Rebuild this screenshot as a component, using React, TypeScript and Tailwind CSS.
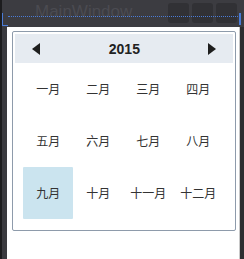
import React from "react";

const months = [
  "一月", "二月", "三月", "四月",
  "五月", "六月", "七月", "八月",
  "九月", "十月", "十一月", "十二月",
];

export default function App() {
  return (
    <div className="relative w-[244px] h-[259px] overflow-hidden bg-white flex flex-col" style={{ fontFamily: '"Noto Sans CJK SC", sans-serif' }}>
      {/* top bar */}
      <div className="h-[27px] flex shrink-0 bg-[#3c3c41]">
        <div className="w-[2px] bg-[#1c1c1e]" />
        <div className="flex-1 relative overflow-hidden">
          <div
            className="absolute left-[33px] top-[2px] text-[17px] leading-[20px] text-[#4b4b51]"
            style={{ fontFamily: '"Liberation Sans", Arial, sans-serif' }}
          >
            MainWindow
          </div>
          <div className="absolute left-[166px] top-[3px] flex gap-[3px]">
            <div className="w-[21px] h-[20px] rounded-[3px] bg-[#313135]" />
            <div className="w-[21px] h-[20px] rounded-[3px] bg-[#313135]" />
            <div className="w-[21px] h-[20px] rounded-[3px] bg-[#313135]" />
          </div>
        </div>
      </div>
      {/* body row */}
      <div className="flex-1 flex">
        <div className="w-[2px] bg-[#1c1c1e]" />
        <div className="w-[6px] bg-[#3a3a3f]" />
        <div className="flex-1 bg-white pl-[5px] pt-[4px] pr-[3px]">
          <div className="w-[224px] h-[200px] border border-[#8e9bab] rounded-[2px] bg-white p-[2px] flex flex-col">
            <div className="h-[29px] bg-[#e6ebf1] flex items-center justify-between px-[17px]">
              <svg width="8" height="12" viewBox="0 0 8 12">
                <polygon points="8,0 8,12 0,6" fill="#1e1e1e" />
              </svg>
              <span
                className="text-[14px] font-bold text-[#222] leading-none"
                style={{ fontFamily: '"Liberation Sans", Arial, sans-serif' }}
              >
                2015
              </span>
              <svg width="8" height="12" viewBox="0 0 8 12">
                <polygon points="0,0 0,12 8,6" fill="#1e1e1e" />
              </svg>
            </div>
            <div className="grid grid-cols-[repeat(4,50px)] grid-rows-[repeat(3,52px)] ml-[8px]">
              {months.map((m, i) => (
                <div
                  key={m}
                  className={
                    "flex items-center justify-center text-[12px] text-[#333] rounded-[1px] " +
                    (i === 8 ? "bg-[#cbe4ef]" : "")
                  }
                >
                  {m}
                </div>
              ))}
            </div>
          </div>
        </div>
        <div className="w-[1px] bg-[#c8c8c8]" />
        <div className="w-[4px] bg-[#2d2d30]" />
      </div>
      {/* designer selection overlay */}
      <div className="absolute left-[8px] top-[16px] w-[232px] h-0 border-t border-dotted border-[#4a7bd6]" />
      <div className="absolute left-[2px] top-[13px] w-[6px] h-[13px] border-l border-b border-[#4a7bd6]" />
      <div className="absolute left-[239px] top-[13px] w-[2px] h-[12px] bg-[#4a7bd6]" />
    </div>
  );
}
